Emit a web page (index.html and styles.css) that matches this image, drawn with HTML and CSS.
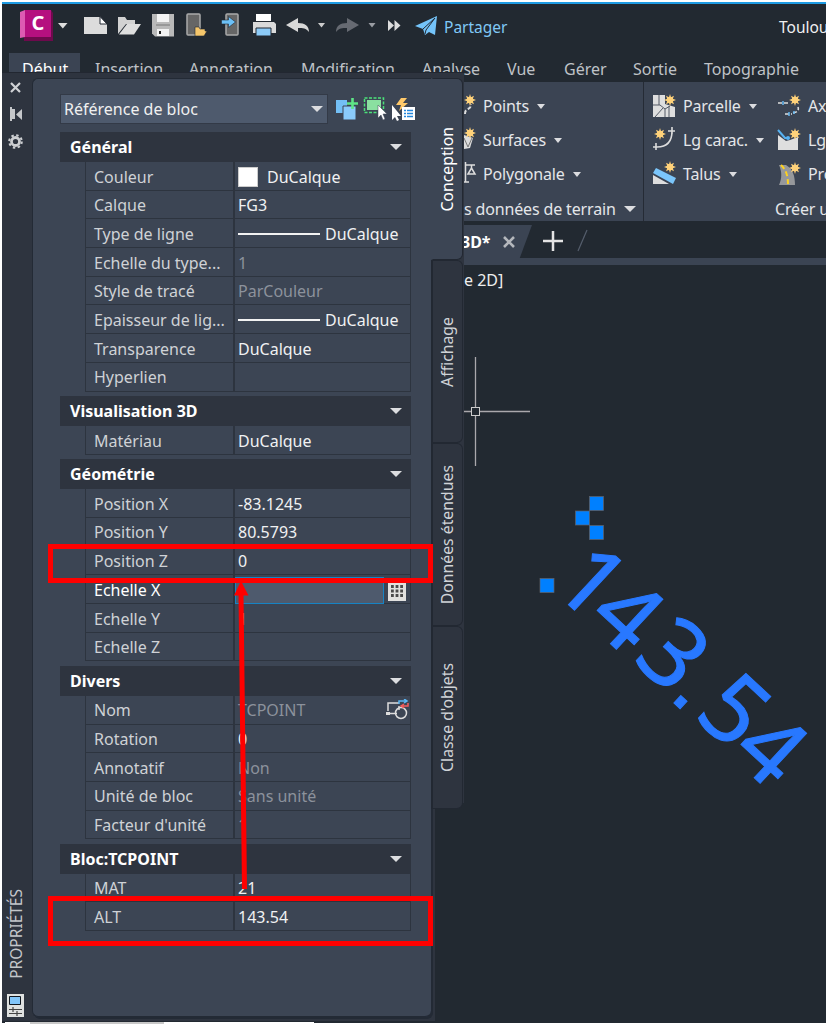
FILE: index.html
```html
<!DOCTYPE html>
<html lang="fr">
<head>
    <meta charset="UTF-8">
    <meta name="viewport" content="width=device-width, initial-scale=1.0">
    <title>Propriétés - Référence de bloc</title>
    <link rel="stylesheet" href="styles.css">
</head>
<body>
    <svg class="defs" width="0" height="0">
        <symbol id="star" viewBox="-6 -6 12 12">
            <path d="M0-6 1-2.8 4-4.2 2.8-1.2 6 0 2.8 1.2 4 4.2 1 2.8 0 6-1 2.8-4 4.2-2.8 1.2-6 0-2.8-1.2-4-4.2-1-2.8Z" fill="#ffd27a"/>
            <circle r="3.2" fill="#ffd27a"/>
        </symbol>
    </svg>

    <div class="app">
        <!-- Barre d'accès rapide -->
        <div class="quick-bar">
            <svg width="442" height="46" viewBox="2 4 442 46">
                <path d="M24 10h27l2 3v28H24z" fill="#6d0a4c"/>
                <path d="M25 10h26v27H25z" fill="#b5107f"/>
                <path d="M20 12l5-2v27l-5 1z" fill="#dd5bb2"/>
                <path d="M58 23h9.500l-4.700 5.500z" fill="#ddd"/>
                <path d="M84 17h16l7 7v10H84z" fill="#dcdcdc"/>
                <path d="M100 16.500v7.500h7z" fill="#fff" stroke="#232933"/>
                <path d="M118 34V17h7l2 3h8v4h-9z" fill="#d2d2d2"/>
                <path d="M127 24h14l-7 10.500h-15z" fill="#dedede"/>
                <path d="M152 14h22v22.500h-19l-3-3z" fill="#b9b9b9"/>
                <path d="M157 14h12v8h-12zM157 29h12v7h-12z" fill="#f3f3f3"/>
                <path d="M156 25h14" stroke="#777"/>
                <path d="M159 31h2v3h-2z" fill="#222"/>
                <rect x="187" y="14" width="13" height="21" rx="1" fill="#666" stroke="#aaa" stroke-width="1.500"/>
                <path d="M195 36v-9h4l1 2h5v2h2l-3 5z" fill="#f5c66b" stroke="#232933" stroke-width=".6"/>
                <rect x="226" y="14" width="12" height="21" rx="1" fill="#666" stroke="#aaa" stroke-width="1.500"/>
                <path d="M221.500 20h7v-3.500l7 5.500-7 5.500v-3.500h-7z" fill="#6cc0f7" stroke="#232933" stroke-width=".6"/>
                <path d="M256 14h15v7h-15z" fill="#fff"/>
                <path d="M253 22h21l2 2v9h-23z" fill="#dadada"/>
                <path d="M256 28h15v8h-15z" fill="#8ccaf7" stroke="#232933"/>
                <path d="M286 25l12-7v5c7 0 11 3 11 9-3-4-6-4-11-4v4z" fill="#d8d8d8"/>
                <path d="M318 23h7l-3.500 4.500z" fill="#ccc"/>
                <path d="M359 25l-12-7v5c-7 0-11 3-11 9 3-4 6-4 11-4v4z" fill="#666a72"/>
                <path d="M368.500 23h7l-3.500 4.500z" fill="#999ca2"/>
                <path d="M388 20l6 5.500-6 5.500zM394.500 20l6 5.500-6 5.500z" fill="#ddd"/>
                <path d="M415 26l22-10-2 19-6-3-4 3-2-6z" fill="#74c4fa"/>
                <path d="M423 29l12-11-9 12-1 4" fill="none" stroke="#232933"/>
                <text class="logo-letter" x="31.500" y="30">C</text>
            </svg>
            <span class="share">Partager</span>
            <span class="doc-title">Toulou</span>
        </div>

        <div class="ribbon-tabs">
            <span class="active t-debut">Début</span>
            <span class="t-insertion">Insertion</span>
            <span class="t-annotation">Annotation</span>
            <span class="t-modification">Modification</span>
            <span class="t-analyse">Analyse</span>
            <span class="t-vue">Vue</span>
            <span class="t-gerer">Gérer</span>
            <span class="t-sortie">Sortie</span>
            <span>Topographie</span>
        </div>

        <!-- Ruban -->
        <div class="ribbon">
            <div class="ribbon-panel terrain">
                <div class="tool">
                    <svg width="19" height="26" viewBox="0 0 19 26"><path d="M1 21c0-7 6-3 6-10" fill="none" stroke="#ddd" stroke-width="2" stroke-dasharray="4 2"/><use href="#star" x="0" y="1" width="12" height="12"/></svg>
                    <span>Points</span><i class="arrow"></i>
                </div>
                <div class="tool">
                    <svg width="19" height="26" viewBox="0 0 19 26"><path d="M0 8l9 3-3 10-6 1z" fill="#ddd"/><path d="M0 11l4 9 4-9" fill="none" stroke="#777"/><use href="#star" x="0" y="0" width="12" height="12"/></svg>
                    <span>Surfaces</span><i class="arrow"></i>
                </div>
                <div class="tool">
                    <svg width="19" height="26" viewBox="0 0 19 26"><path d="M1.500 1v20M1 4h10M0 21h5M7.500 4v4M4 13l3.500-6 3.500 6z" fill="none" stroke="#ddd" stroke-width="1.500"/></svg>
                    <span>Polygonale</span><i class="arrow"></i>
                </div>
                <div class="panel-title">s données de terrain<i class="arrow big"></i></div>
            </div>
            <div class="ribbon-panel creer">
                <div class="tool">
                    <svg width="31" height="26" viewBox="0 0 31 26"><path d="M1 2h12v9l10 3v10H1z" fill="#dedede"/><path d="M1 12h7l5 4v8M3 24l8-9M7 2v10M17 13v11M13 16l5-3" fill="none" stroke="#555b66"/><use href="#star" x="12" y="1" width="12" height="12"/></svg>
                    <span>Parcelle</span><i class="arrow"></i>
                </div>
                <div class="tool">
                    <svg width="31" height="26" viewBox="0 0 31 26"><path d="M4 16v7M1 20h4c10 0 15-6 15-16M16 4h7M20 0v7" fill="none" stroke="#ddd" stroke-width="1.600"/><use href="#star" x="2" y="1" width="12" height="12"/></svg>
                    <span>Lg carac.</span><i class="arrow"></i>
                </div>
                <div class="tool">
                    <svg width="31" height="26" viewBox="0 0 31 26"><path d="M1 14l16 9H1z" fill="#dedede"/><path d="M4 7l20 10-3 6L1 12z" fill="#7bc6fb"/><use href="#star" x="12" y="0" width="12" height="12"/></svg>
                    <span>Talus</span><i class="arrow"></i>
                </div>
            </div>
            <div class="ribbon-panel projet">
                <div class="tool">
                    <svg width="31" height="26" viewBox="0 0 31 26"><path d="M1 10h12M8 21h7M16 20c5-1 6-3 5-6" fill="none" stroke="#ddd" stroke-width="1.600" stroke-dasharray="4 2"/><path d="M6 8v4M12 19v4M17 18v3" stroke="#65b9f4" stroke-width="1.500"/><use href="#star" x="12" y="1" width="12" height="12"/></svg>
                    <span>Ax</span>
                </div>
                <div class="tool">
                    <svg width="31" height="26" viewBox="0 0 31 26"><path d="M1 8l8 6 4-1 8-3v13H1z" fill="#dedede"/><path d="M1 3l7 8h4" fill="none" stroke="#57b2f2" stroke-width="2"/><circle cx="11" cy="11" r="2" fill="#57b2f2"/><use href="#star" x="12" y="1" width="12" height="12"/></svg>
                    <span>Lg</span>
                </div>
                <div class="tool">
                    <svg width="31" height="26" viewBox="0 0 31 26"><path d="M2 4h7c7 4 9 11 9 20H2c3-7 3-13 0-20z" fill="#96989b"/><path d="M4 4c5 5 7 10 7 20" fill="none" stroke="#ffd21f" stroke-width="2" stroke-dasharray="5 3"/><use href="#star" x="12" y="1" width="12" height="12"/></svg>
                    <span>Pro</span>
                </div>
                <div class="panel-title">Créer u</div>
            </div>
        </div>

        <div class="file-tabs">
            <div class="file-tab"><b>3D*</b><svg width="12" height="12" viewBox="0 0 12 12"><path d="M1 1l10 10M11 1L1 11" stroke="#b4b7bc" stroke-width="2.600"/></svg></div>
            <svg class="new-tab" width="50" height="30" viewBox="0 0 50 30"><path d="M1 17h20M11 7v20" stroke="#e4e4e4" stroke-width="2.500"/><path d="M45 6l-9 21" stroke="#555e6c" stroke-width="1.200"/></svg>
        </div>

        <!-- Espace de dessin -->
        <div class="drawing">
            <span class="view-label">e 2D]</span>
            <svg class="canvas" width="362" height="757" viewBox="464 265 362 757">
                <path d="M475.500 357v50M475.500 416v50M464 411.500h7M480 411.500h50" stroke="#aaa8ac" stroke-width="1.300"/>
                <rect x="471.500" y="407.500" width="8" height="8" fill="none" stroke="#ccc"/>
                <g fill="#0080ff" stroke="#62636a" stroke-width=".7">
                    <rect x="589.500" y="496.500" width="14" height="14"/>
                    <rect x="575.500" y="511" width="14" height="14"/>
                    <rect x="589.500" y="525.500" width="14" height="14"/>
                    <rect x="540" y="578.500" width="14" height="14"/>
                </g>
                <text class="altitude" transform="translate(571 607) rotate(43)" x="-29 19.600 80 132 163 216" y="0 0 -2.500 0 -3 0">143<tspan class="point">.</tspan>54</text>
            </svg>
        </div>
    </div>

    <!-- Palette des propriétés -->
    <div class="palette">
        <div class="side-strip">
            <svg width="30" height="80" viewBox="2 76 30 80">
                <path d="M11 83l9 9M20 83l-9 9" stroke="#d0d2d5" stroke-width="2.200"/>
                <path d="M11 107v14" stroke="#c5c7ca" stroke-width="2"/><path d="M12 109h3v10h-3zM22 109v11l-6-5.500z" fill="#c5c7ca"/>
                <circle cx="15.500" cy="141.500" r="4" fill="none" stroke="#ccced1" stroke-width="2.800"/>
                <circle cx="15.500" cy="141.500" r="6.300" fill="none" stroke="#ccced1" stroke-width="2" stroke-dasharray="2.470 2.470"/>
            </svg>
            <span class="strip-title">PROPRIÉTÉS</span>
            <svg width="17" height="23" viewBox="0 0 17 23"><path d="M0 0h17v23H0z" fill="#dfe1e0"/><path d="M2.500 2.500h11v8h-11z" fill="#82c6fa" stroke="#111820"/><path d="M2 15.500h13M2 19.500h13M6 13v5M10 17v5" stroke="#444" stroke-width="1.200"/></svg>
        </div>

        <div class="palette-body">
            <div class="selector">
                <div class="combo"><span>Référence de bloc</span><i class="arrow big"></i></div>
                <svg width="84" height="30" viewBox="332 94 84 30">
                    <path d="M336 100h11v13h-11z" fill="#73bff5"/>
                    <path d="M343 106h13v14h-13z" fill="#8acbfb" stroke="#3c4554"/>
                    <path d="M352.500 98v11M347 103.500h11" stroke="#5ee487" stroke-width="2.600"/>
                    <path d="M367 100h14v10h-14z" fill="#8ae0a0"/>
                    <rect x="364.500" y="98" width="19" height="14.500" fill="none" stroke="#4be27a" stroke-width="1.500" stroke-dasharray="3 1.500"/>
                    <path d="M378 105v13l3-3 2 5 2-1-2-5h4z" fill="#fff" stroke="#3c4554" stroke-width=".5"/>
                    <path d="M401 98l-5 7h5l-2 6 9-8h-5l4-5z" fill="#ffc96a"/>
                    <path d="M392 105v15l3-3 2 4 2-1-2-4h4z" fill="#fff"/>
                    <path d="M402 107h13v13h-13z" fill="#fff"/>
                    <path d="M404 110.500h2M404 113.500h2M404 116.500h2M407 110.500h6M407 113.500h6M407 116.500h6" stroke="#2488de" stroke-width="1.400"/>
                </svg>
            </div>

            <div class="group">
                <h3>Général<i class="arrow big"></i></h3>
                <div class="row"><span>Couleur</span><span><i class="swatch"></i>DuCalque</span></div>
                <div class="row"><span>Calque</span><span>FG3</span></div>
                <div class="row"><span>Type de ligne</span><span><i class="line"></i>DuCalque</span></div>
                <div class="row"><span class="long">Echelle du type...</span><span class="off">1</span></div>
                <div class="row"><span>Style de tracé</span><span class="off">ParCouleur</span></div>
                <div class="row"><span class="long">Epaisseur de lig...</span><span><i class="line"></i>DuCalque</span></div>
                <div class="row"><span>Transparence</span><span>DuCalque</span></div>
                <div class="row"><span>Hyperlien</span><span></span></div>
            </div>

            <div class="group">
                <h3>Visualisation 3D<i class="arrow big"></i></h3>
                <div class="row"><span>Matériau</span><span>DuCalque</span></div>
            </div>

            <div class="group">
                <h3>Géométrie<i class="arrow big"></i></h3>
                <div class="row"><span>Position X</span><span>-83.1245</span></div>
                <div class="row"><span>Position Y</span><span>80.5793</span></div>
                <div class="row"><span>Position Z</span><span>0</span></div>
                <div class="row selected"><span>Echelle X</span><span><i class="field"></i>
                    <svg width="18" height="22" viewBox="0 0 18 22"><path d="M0 0h18v22H0z" fill="#e1e1df"/><path d="M3 7.500h12M3 12h12M3 16.500h12" stroke="#4a4a4a" stroke-width="2.800" stroke-dasharray="2.800 1.800"/></svg>
                </span></div>
                <div class="row"><span>Echelle Y</span><span>1</span></div>
                <div class="row"><span>Echelle Z</span><span></span></div>
            </div>

            <div class="group">
                <h3>Divers<i class="arrow big"></i></h3>
                <div class="row"><span>Nom</span><span class="off">TCPOINT
                    <svg class="swap" width="24" height="22" viewBox="0 0 24 22"><path d="M2 12V4h11M2 14.500h9M13 11V7" fill="none" stroke="#ddd" stroke-width="1.500"/><circle cx="15" cy="14" r="5.500" fill="none" stroke="#ddd" stroke-width="1.500"/><path d="M0 13h4v3H0z" fill="#ddd"/><path d="M13 5V2h7M18 0l3 2-3 2" fill="none" stroke="#5cb7f5" stroke-width="1.500"/><path d="M22 4v3h-6M18 5l-3 2 3 2" fill="none" stroke="#f35c5c" stroke-width="1.500"/></svg>
                </span></div>
                <div class="row"><span>Rotation</span><span>0</span></div>
                <div class="row"><span>Annotatif</span><span class="off">Non</span></div>
                <div class="row"><span>Unité de bloc</span><span class="off">Sans unité</span></div>
                <div class="row"><span>Facteur d'unité</span><span class="off">1</span></div>
            </div>

            <div class="group">
                <h3>Bloc:TCPOINT<i class="arrow big"></i></h3>
                <div class="row"><span>MAT</span><span>21</span></div>
                <div class="row"><span>ALT</span><span>143.54</span></div>
            </div>
        </div>

        <div class="side-tabs">
            <div class="side-tab current"><span>Conception</span></div>
            <div class="side-tab"><span>Affichage</span></div>
            <div class="side-tab"><span>Données étendues</span></div>
            <div class="side-tab"><span>Classe d'objets</span></div>
        </div>
    </div>

    <!-- Annotations rouges -->
    <svg class="marks" width="827" height="1024" viewBox="0 0 827 1024">
        <path d="M50.500 546.500h380v34h-380zM50.500 898.500h380v45h-380z" fill="none" stroke="#f00" stroke-width="5"/>
        <path d="M244.500 889L241 594" stroke="#f00" stroke-width="5"/>
        <path d="M241 581l7.500 14.500h-14.500z" fill="#f00"/>
    </svg>

    <div class="bottom-edge"></div>
</body>
</html>
```

FILE: styles.css
```css
* {
    box-sizing: border-box;
}

body {
    margin: 0;
    width: 827px;
    height: 1024px;
    position: relative;
    overflow: hidden;
    background-color: #fff;
    color: #e4e6e9;
    font-family: "Noto Sans", "Open Sans", sans-serif;
    font-size: 16px;
    white-space: nowrap;
}

.defs {
    position: absolute;
}

.app {
    display: flex;
    flex-direction: column;
    width: 824px;
    height: 1021px;
    margin: 2px 0 0 2px;
    overflow: hidden;
    background-color: #222931;
    border-top: 2px solid #1e9be3;
}

.quick-bar {
    display: flex;
    height: 49px;
    flex: none;
    line-height: 46px;
}

.quick-bar svg {
    flex: none;
}

.logo-letter {
    font-size: 20px;
    font-weight: bold;
    fill: #fff;
}

.share {
    flex: none;
    width: 335px;
    color: #80c8f6;
    font-size: 15.5px;
}

.doc-title {
    flex: none;
    color: #f0f0f0;
    font-size: 15.5px;
}

.ribbon-tabs {
    display: flex;
    flex: none;
    height: 29px;
    padding-left: 7px;
    line-height: 32px;
    color: #bfc2c7;
}

.ribbon-tabs span {
    flex: none;
}

.ribbon-tabs .active {
    padding-left: 13px;
    color: #fff;
    background-color: #3b4453;
}

.t-debut { width: 71px; margin-right: 15px; }
.t-insertion { width: 94px; }
.t-annotation { width: 112px; }
.t-modification { width: 121px; }
.t-analyse { width: 85px; }
.t-vue { width: 57px; }
.t-gerer { width: 69px; }
.t-sortie { width: 71px; }

.ribbon {
    display: flex;
    flex: none;
    height: 139px;
    padding-left: 462px;
    background-color: #3b4453;
    letter-spacing: -0.15px;
}

.ribbon-panel {
    display: flex;
    flex-direction: column;
    flex: none;
    padding-top: 7px;
}

.terrain {
    width: 180px;
    border-right: 1px solid #252b35;
}

.creer {
    width: 133px;
    padding-left: 8px;
}

.tool {
    display: flex;
    flex: none;
    align-items: center;
    height: 34px;
}

.arrow {
    flex: none;
    margin-left: 8px;
    border: 4px solid transparent;
    border-top: 5px solid #dcdde0;
    border-bottom: none;
}

.arrow.big {
    border-width: 6px 6px 0;
}

.panel-title {
    display: flex;
    flex: none;
    align-items: center;
    height: 36px;
}

.projet .panel-title {
    margin-left: -2px;
}

.file-tabs {
    display: flex;
    flex: none;
    height: 44px;
    padding: 4px 0 0 462px;
    border-bottom: 7px solid #3b4453;
}

.file-tab {
    display: flex;
    align-items: center;
    gap: 12px;
    width: 68px;
    height: 33px;
    color: #fff;
    background-color: #3b4453;
    clip-path: polygon(0 0, 100% 0, 82% 100%, 0 100%);
}

.file-tab b {
    margin-left: -3px;
}

.new-tab {
    margin-left: 10px;
    margin-top: -1px;
}

.drawing {
    flex: 1;
    padding-left: 462px;
    position: relative;
}

.view-label {
    line-height: 31px;
    color: #eee;
}

.canvas {
    position: absolute;
    left: 462px;
    top: 0;
}

.altitude {
    font-size: 95px;
    fill: #2878ff;
    stroke: #2878ff;
    stroke-width: 1;
}

.point {
    font-family: "DejaVu Sans", sans-serif;
    font-size: 82px;
}

/* palette flottante */
.palette {
    position: absolute;
    left: 2px;
    top: 72px;
    width: 462px;
    height: 949px;
    display: flex;
    background: linear-gradient(#2e343f, #2e343f) 0 0 / 433px 100% no-repeat;
    border-top: 1px solid #222731;
}

.side-strip {
    display: flex;
    flex-direction: column;
    flex: none;
    align-items: center;
    width: 30px;
    padding: 3px 3px 4px 0;
}

.side-strip svg:first-child {
    margin-left: 3px;
}

.strip-title {
    margin-top: auto;
    margin-bottom: 15px;
    writing-mode: vertical-rl;
    transform: rotate(180deg);
    font-size: 15.5px;
    line-height: 20px;
    color: #c3c6ca;
}

.palette-body {
    flex: none;
    width: 399px;
    height: 939px;
    margin-top: 5px;
    padding: 15px 0 0 27px;
    background-color: #3c4554;
    border: 1px solid #232a35;
    border-right-width: 0;
    border-radius: 6px 0 6px 6px;
    box-shadow: 2px 2px 0 #232a35;
}

.selector {
    display: flex;
    align-items: center;
    gap: 4px;
    height: 30px;
    margin-bottom: 8px;
}

.combo {
    display: flex;
    align-items: center;
    justify-content: space-between;
    width: 268px;
    height: 30px;
    padding: 0 4px 0 3px;
    color: #f0f0f0;
    background-color: #4e5a6d;
    border: 1px solid #333a47;
}

.group {
    width: 351px;
    margin-bottom: 4.5px;
}

.group h3 {
    display: flex;
    align-items: center;
    justify-content: space-between;
    height: 30px;
    margin: 0;
    padding: 0 9px 0 10px;
    font-size: 16px;
    color: #fff;
    background-color: #2e343f;
}

.row {
    display: grid;
    grid-template-columns: 147px 1fr;
    height: 28.7px;
    margin-left: 25px;
    border: solid #2d343f;
    border-width: 0 1.5px 1.5px;
}

.row > span {
    display: flex;
    align-items: center;
    padding-top: 1.5px;
    padding-left: 8px;
    color: #cfd2d6;
}

.row > span + span {
    padding-left: 3px;
    color: #f0f1f2;
    border-left: 2px solid #2d343f;
}

.row > span.off {
    color: #8c929c;
}

.row.selected > span {
    color: #fff;
}

.swatch {
    width: 20px;
    height: 20px;
    margin-right: 9px;
    background-color: #fff;
    border: 1px solid #ccc;
}

.line {
    width: 82px;
    height: 2px;
    margin-right: 5px;
    background-color: #f2f2f2;
}

.field {
    width: 149px;
    height: 27px;
    margin: 0 4px 0 -3px;
    background-color: #4e5a6d;
    border: 1px solid #1683c4;
}

.swap {
    margin-left: auto;
}

.side-tabs {
    flex: none;
    width: 33px;
    padding-top: 5px;
    background: linear-gradient(#2e343f, #2e343f) 0 0 / 100% 730px no-repeat;
}

.side-tab {
    display: flex;
    align-items: center;
    justify-content: center;
    width: 32px;
    height: 183px;
    padding-right: 1px;
    color: #d0d3d7;
    background-color: #2e343f;
    border: 1px solid #222832;
    border-left: 2px solid #222832;
    border-radius: 0 6px 6px 0;
}

.side-tab.current {
    height: 182px;
    color: #fff;
    background-color: #3c4554;
    border-left-color: #3c4554;
}

.side-tab span {
    writing-mode: vertical-rl;
    transform: rotate(180deg);
    line-height: 20px;
    font-size: 15.8px;
}

.marks {
    position: absolute;
    left: 0;
    top: 0;
}

.bottom-edge {
    position: absolute;
    left: 5px;
    bottom: 0;
    width: 309px;
    height: 2px;
    background: linear-gradient(90deg, #fff 25px, #c8c8c8 25px, #c8c8c8 159px, #fff 159px);
}
```
